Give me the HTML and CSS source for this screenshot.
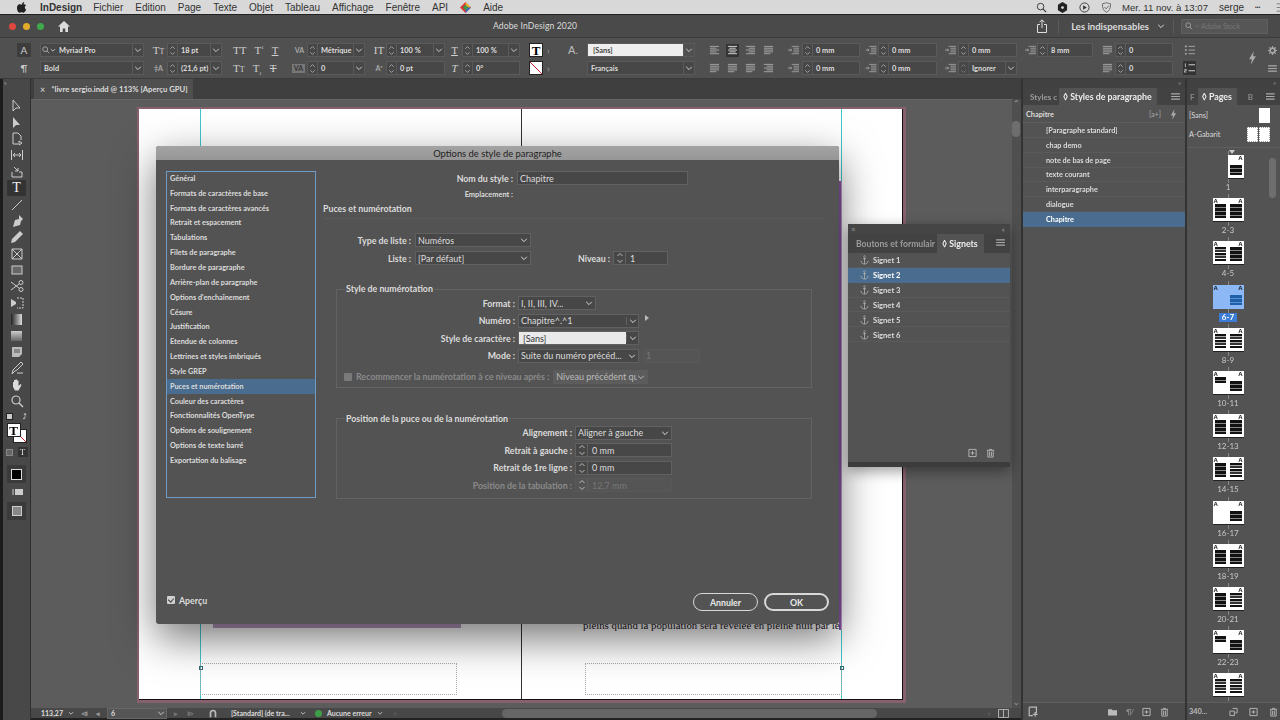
FILE: index.html
```html
<!DOCTYPE html>
<html lang="fr">
<head>
    <meta charset="UTF-8">
    <title>Adobe InDesign 2020</title>
    <link rel="stylesheet" href="styles.css">
</head>
<body>

<svg class="sprite" width="0" height="0">
    <symbol id="spin" viewBox="0 0 8 12"><path d="M1.500 4 4 1.500 6.500 4M1.500 8 4 10.500 6.500 8" fill="none" stroke="currentColor"/></symbol>
    <symbol id="chev" viewBox="0 0 8 8"><path d="M1.200 2.800 4 5.600 6.800 2.800" fill="none" stroke="currentColor"/></symbol>
    <symbol id="al-l" viewBox="0 0 12 12"><path d="M1 1.500h10M1 3.500h7M1 5.500h10M1 7.500h7M1 9.500h10" stroke="currentColor"/></symbol>
    <symbol id="al-c" viewBox="0 0 12 12"><path d="M1 1.500h10M2.500 3.500h7M1 5.500h10M2.500 7.500h7M1 9.500h10" stroke="currentColor"/></symbol>
    <symbol id="al-r" viewBox="0 0 12 12"><path d="M1 1.500h10M4 3.500h7M1 5.500h10M4 7.500h7M1 9.500h10" stroke="currentColor"/></symbol>
    <symbol id="al-j" viewBox="0 0 12 12"><path d="M1 1.500h10M1 3.500h10M1 5.500h10M1 7.500h10M1 9.500h7" stroke="currentColor"/></symbol>
    <symbol id="ind" viewBox="0 0 14 12"><path d="M5 1.500h8M7 3.500h6M7 5.500h6M7 7.500h6M5 9.500h8M1 5.500h4M3.500 4 5 5.500 3.500 7" fill="none" stroke="currentColor" stroke-width=".9"/></symbol>
    <symbol id="bul" viewBox="0 0 12 12"><path d="M1 1.500h2M1 5.500h2M1 9.500h2" stroke="currentColor" stroke-width="1.800"/><path d="M5 1.500h7M5 5.500h7M5 9.500h7" stroke="currentColor"/></symbol>
    <symbol id="nums" viewBox="0 0 12 12"><path d="M1.500 1v4M.5 7.500h2v1.500h-2v1.500h2" fill="none" stroke="currentColor" stroke-width=".8"/><path d="M5 2.500h7M5 9h7" stroke="currentColor"/></symbol>
    <symbol id="menu" viewBox="0 0 10 8"><path d="M0 1h10M0 4h10M0 7h10" stroke="currentColor" stroke-width="1.300"/></symbol>
    <symbol id="newp" viewBox="0 0 10 10"><path d="M1 1h8v8H1zM5 3v4M3 5h4" fill="none" stroke="currentColor"/></symbol>
    <symbol id="trash" viewBox="0 0 10 11"><path d="M3.500 1.500h3M1 2.500h8M2 3v7h6V3M4 4v5M6 4v5" fill="none" stroke="currentColor"/></symbol>
    <symbol id="anchor" viewBox="0 0 10 11"><path d="M5 2.500V10M3.400 4h3.200M1 6.500C1.400 9 3 10 5 10s3.600-1 4-3.500" fill="none" stroke="currentColor"/><circle cx="5" cy="1.500" r="1" fill="none" stroke="currentColor" stroke-width=".7"/></symbol>
    <symbol id="bolt" viewBox="0 0 8 12"><path d="M5 0 1 7h2.500L2.500 12 7 4.500H4.500z" fill="currentColor"/></symbol>
    <symbol id="gear" viewBox="0 0 10 10"><circle cx="5" cy="5" r="2.700" fill="none" stroke="currentColor" stroke-width="1.800"/><path d="M5 0v2M5 8v2M0 5h2M8 5h2M1.500 1.500l1.400 1.400M7.100 7.100l1.400 1.400M8.500 1.500 7.100 2.900M2.900 7.100 1.500 8.500" stroke="currentColor" stroke-width="1.300"/></symbol>
</svg>

<div class="app">
    <div class="menubar">
        <svg class="apple" viewBox="0 0 12 13"><path d="M8.600 0c.1 1-.3 1.800-.8 2.400-.5.600-1.300 1-2 .9-.1-.9.300-1.800.8-2.300C7.100.5 8 .1 8.600 0zM11 9.200c-.3.700-.5 1-.9 1.600-.6.800-1.300 1.900-2.300 1.900-.9 0-1.100-.6-2.300-.6s-1.500.6-2.400.6c-1 0-1.700-.9-2.300-1.800C-.2 8.500-.3 5.600.7 4.100c.7-1 1.700-1.600 2.700-1.600s1.700.6 2.500.6 1.300-.6 2.500-.6c.9 0 1.800.5 2.500 1.300-2.200 1.200-1.800 4.300.1 5.400z" fill="#222"/></svg>
        <span class="app-name">InDesign</span>
        <span>Fichier</span><span>Edition</span><span>Page</span><span>Texte</span><span>Objet</span><span>Tableau</span><span>Affichage</span><span>Fenêtre</span><span>API</span>
        <svg class="diamond" viewBox="0 0 12 12"><path d="M6 0 12 6 6 12 0 6z" fill="#d33"/><path d="M6 0 12 6H6z" fill="#e9b52c"/><path d="M6 6h6L6 12z" fill="#3a6fc2"/><path d="M3 6 6 3 9 6 6 9z" fill="#3d9a4a"/></svg>
        <span>Aide</span>
        <div class="menu-right">
            <svg class="mi search" viewBox="0 0 12 12"><circle cx="5" cy="5" r="3.600" fill="none" stroke="#333"/><path d="M7.600 7.600 11 11" stroke="#333" stroke-width="1.200"/></svg>
            <svg class="mi" viewBox="0 0 12 12"><path d="M6 0 11 3v6l-5 3-5-3V3z" fill="#222"/><circle cx="6" cy="6" r="1.500" fill="#ddd"/></svg>
            <svg class="mi" viewBox="0 0 12 12"><circle cx="6" cy="6" r="5" fill="none" stroke="#333"/><path d="M4.500 3.500v5L8.500 6z" fill="#333"/></svg>
            <svg class="mi" viewBox="0 0 12 12"><path d="M1.500 2 6 .8 10.500 2c0 5-1.500 8-4.500 9.200C3 10 1.500 7 1.500 2z" fill="none" stroke="#666"/><path d="M3.800 5.500 5.600 7.500 8.500 4" fill="none" stroke="#666"/></svg>
            <span class="clock">Mer. 11 nov. à 13:07</span>
            <span class="user">serge</span>
            <span class="dots">•••</span>
            <svg class="mi list" viewBox="0 0 12 12"><path d="M3 2h9M3 6h9M3 10h9" stroke="#777"/></svg>
        </div>
    </div>

    <div class="titlebar">
        <i class="light red"></i><i class="light yellow"></i><i class="light green"></i>
        <svg class="home" viewBox="0 0 12 11"><path d="M6 0 12 5.500H10V11H7.300V7.500H4.700V11H2V5.500H0z" fill="#ddd"/></svg>
        <span class="app-title">Adobe InDesign 2020</span>
        <div class="title-right">
            <svg class="share" viewBox="0 0 12 14"><path d="M6 9V1M3.500 3.300 6 .8l2.500 2.500M4 5.500H1.500v8h9v-8H8" fill="none" stroke="#ddd"/></svg>
            <span class="vsep"></span>
            <b class="workspace">Les indispensables</b>
            <svg class="ic8 wchev"><use href="#chev"/></svg>
            <span class="vsep"></span>
            <div class="stock"><svg class="ic8" viewBox="0 0 10 10"><circle cx="4" cy="4" r="3" fill="none" stroke="#aaa"/><path d="M6.200 6.200 9 9" stroke="#aaa"/></svg><svg class="ic6"><use href="#chev"/></svg>Adobe Stock</div>
        </div>
    </div>

    <div class="ctl">
        <span class="c mode on">A</span>
        <span class="c mode">¶</span>

        <div class="c"><div class="fld"><svg class="ic8 muted" viewBox="0 0 10 10"><circle cx="4" cy="4" r="3" fill="none" stroke="#bbb"/><path d="M6.200 6.200 9 9" stroke="#bbb"/></svg><svg class="ic6"><use href="#chev"/></svg><span class="val">Myriad Pro</span><span class="dd"><svg class="ic8"><use href="#chev"/></svg></span></div></div>
        <div class="c"><div class="fld"><span class="val">Bold</span><span class="dd"><svg class="ic8"><use href="#chev"/></svg></span></div></div>

        <div class="c pr8"><span class="g w17">T<small>T</small></span><div class="fld"><span class="sp"><svg><use href="#spin"/></svg></span><span class="val">18 pt</span><span class="dd"><svg class="ic8"><use href="#chev"/></svg></span></div></div>
        <div class="c pr8"><span class="g w17 lo">‡A</span><div class="fld"><span class="sp"><svg><use href="#spin"/></svg></span><span class="val">(21,6 pt)</span><span class="dd"><svg class="ic8"><use href="#chev"/></svg></span></div></div>

        <div class="c cases"><span class="g">TT</span><span class="g">T<sup>1</sup></span><span class="g under">T</span></div>
        <div class="c cases"><span class="g">T<small>T</small></span><span class="g">T<sub>1</sub></span><span class="g strike">T</span></div>

        <div class="c pr7"><span class="g w15 lo">VA</span><div class="fld"><span class="sp"><svg><use href="#spin"/></svg></span><span class="val">Métrique</span><span class="dd"><svg class="ic8"><use href="#chev"/></svg></span></div></div>
        <div class="c pr7"><span class="g w15 lo box">VA</span><div class="fld"><span class="sp"><svg><use href="#spin"/></svg></span><span class="val">0</span><span class="dd"><svg class="ic8"><use href="#chev"/></svg></span></div></div>

        <div class="c pr2"><span class="g w14">IT</span><div class="fld"><span class="sp"><svg><use href="#spin"/></svg></span><span class="val">100 %</span><span class="dd"><svg class="ic8"><use href="#chev"/></svg></span></div></div>
        <div class="c pr2"><span class="g w14 lo">Aª</span><div class="fld"><span class="sp"><svg><use href="#spin"/></svg></span><span class="val">0 pt</span></div></div>

        <div class="c pr9"><span class="g w15 under">T</span><div class="fld"><span class="sp"><svg><use href="#spin"/></svg></span><span class="val">100 %</span><span class="dd"><svg class="ic8"><use href="#chev"/></svg></span></div></div>
        <div class="c pr9"><span class="g w15 ital">T</span><div class="fld"><span class="sp"><svg><use href="#spin"/></svg></span><span class="val">0°</span></div></div>

        <div class="c swatch"><span class="fill-t">T</span><span class="more">›</span></div>
        <div class="c swatch"><span class="fill-none"></span><span class="more">›</span></div>

        <span class="c a-dot">A.</span>
        <span class="c"></span>

        <div class="c pr13"><div class="fld light-fld"><span class="val">[Sans]</span><span class="dd"><svg class="ic8"><use href="#chev"/></svg></span></div></div>
        <div class="c pr13"><div class="fld"><span class="val">Français</span><span class="dd"><svg class="ic8"><use href="#chev"/></svg></span></div></div>

        <div class="c aligns"><svg><use href="#al-l"/></svg><svg class="sel"><use href="#al-c"/></svg><svg><use href="#al-r"/></svg><svg><use href="#al-j"/></svg></div>
        <div class="c aligns"><svg><use href="#al-j"/></svg><svg><use href="#al-j"/></svg><svg><use href="#al-j"/></svg><svg><use href="#al-r"/></svg></div>

        <div class="c pr4"><svg class="ico w17"><use href="#ind"/></svg><div class="fld"><span class="sp"><svg><use href="#spin"/></svg></span><span class="val">0 mm</span></div></div>
        <div class="c pr4"><svg class="ico w17"><use href="#ind"/></svg><div class="fld"><span class="sp"><svg><use href="#spin"/></svg></span><span class="val">0 mm</span></div></div>

        <div class="c"><svg class="ico w14"><use href="#ind"/></svg><div class="fld"><span class="sp"><svg><use href="#spin"/></svg></span><span class="val">0 mm</span></div></div>
        <div class="c"><svg class="ico w14"><use href="#ind"/></svg><div class="fld"><span class="sp"><svg><use href="#spin"/></svg></span><span class="val">0 mm</span></div></div>

        <div class="c pr7"><svg class="ico w15"><use href="#ind"/></svg><div class="fld"><span class="sp"><svg><use href="#spin"/></svg></span><span class="val">0 mm</span></div></div>
        <div class="c pr7"><svg class="ico w15"><use href="#ind"/></svg><div class="fld"><span class="sp dim"><svg><use href="#spin"/></svg></span><span class="val">Ignorer</span><span class="dd"><svg class="ic8"><use href="#chev"/></svg></span></div></div>

        <div class="c pr7"><svg class="ico w13"><use href="#ind"/></svg><div class="fld"><span class="sp"><svg><use href="#spin"/></svg></span><span class="val">8 mm</span></div></div>
        <span class="c"></span>

        <div class="c pr10"><svg class="ico w15"><use href="#al-j"/></svg><div class="fld"><span class="sp"><svg><use href="#spin"/></svg></span><span class="val">0</span></div></div>
        <div class="c pr10"><svg class="ico w15"><use href="#al-j"/></svg><div class="fld"><span class="sp"><svg><use href="#spin"/></svg></span><span class="val">0</span></div></div>

        <div class="c"><svg class="ico w13"><use href="#bul"/></svg></div>
        <div class="c"><svg class="ico w13 sel"><use href="#nums"/></svg></div>

        <div class="c bolt-cell"><svg><use href="#bolt"/></svg></div>
        <span class="c"></span>

        <div class="c gear"><svg><use href="#gear"/></svg></div>
        <div class="c gear"><svg class="ic-menu"><use href="#menu"/></svg></div>
    </div>

    <div class="workarea">
        <aside class="tools">
            <div class="tools-top">»</div>
            <div class="tool"><svg viewBox="0 0 14 14"><path d="M3 1v11l3-3 4 0z" fill="none" stroke="#ccc"/></svg></div>
            <div class="tool"><svg viewBox="0 0 14 14"><path d="M3 1v11l3-3 4 0z" fill="#ccc"/></svg></div>
            <div class="tool"><svg viewBox="0 0 14 14"><path d="M3 1h5l3 3v4M3 1v11h5M9 9v4l3-2z" fill="none" stroke="#ccc"/></svg></div>
            <div class="tool"><svg viewBox="0 0 14 14"><path d="M1.500 2v10M12.500 2v10M3 7h8M5 5 3 7l2 2M9 5l2 2-2 2" fill="none" stroke="#ccc"/></svg></div>
            <div class="tool"><svg viewBox="0 0 14 14"><path d="M2 7v5h10V7H9M4 8h0M4 2l4 4M8 3v3H5" fill="none" stroke="#ccc"/></svg></div>
            <div class="tool on"><span>T</span></div>
            <div class="tool"><svg viewBox="0 0 14 14"><path d="M2 12 12 2" stroke="#ccc"/></svg></div>
            <div class="tool"><svg viewBox="0 0 14 14"><path d="M9 1l4 4-2 2-1 4-7 2 2-7 4-1z" fill="#ccc"/></svg></div>
            <div class="tool"><svg viewBox="0 0 14 14"><path d="M10 1l3 3-8 8-4 1 1-4z" fill="#ccc"/></svg></div>
            <div class="tool"><svg viewBox="0 0 14 14"><path d="M2 2h10v10H2zM2 2l10 10M12 2 2 12" fill="none" stroke="#ccc"/></svg></div>
            <div class="tool"><svg viewBox="0 0 14 14"><rect x="2" y="3" width="10" height="8" fill="#666" stroke="#ccc"/></svg></div>
            <div class="tool"><svg viewBox="0 0 14 14"><circle cx="11" cy="3.500" r="2" fill="none" stroke="#ccc"/><circle cx="11" cy="10.500" r="2" fill="none" stroke="#ccc"/><path d="M1 3l8 6M1 11l8-6" stroke="#ccc"/></svg></div>
            <div class="tool"><svg viewBox="0 0 14 14"><path d="M1 3l5 3v2l-5 3z" fill="#ccc"/><path d="M7 2h6v10H7" fill="none" stroke="#ccc" stroke-dasharray="2 1"/></svg></div>
            <div class="tool"><i class="grad"></i></div>
            <div class="tool"><i class="grad2"></i></div>
            <div class="tool"><svg viewBox="0 0 14 14"><path d="M2 2h10v7l-3 3H2z" fill="#bbb"/><path d="M4 5h6M4 7h6" stroke="#555"/></svg></div>
            <div class="tool"><svg viewBox="0 0 14 14"><path d="M11 1l2 2-6 6-2 1-3 3 1-4 1-1zM7 12h6" fill="none" stroke="#ccc"/></svg></div>
            <div class="tool"><svg viewBox="0 0 14 14"><path d="M3 7V4h1v3V2h1.500v5V1.500H7V7V2.500h1.500V8l2-2 1 1-3 5.500H5L3 9z" fill="#ddd"/></svg></div>
            <div class="tool"><svg viewBox="0 0 14 14"><circle cx="6" cy="6" r="4" fill="none" stroke="#ccc" stroke-width="1.200"/><path d="M9 9l4 4" stroke="#ccc" stroke-width="1.400"/></svg></div>
            <div class="swap"><i></i><span>⤴</span></div>
            <div class="fills"><span class="fill-t">T</span><span class="fill-none"></span></div>
            <div class="format"><i></i><b>T</b></div>
            <div class="tool dark"><i class="blk"></i></div>
            <div class="tool"><svg viewBox="0 0 14 14"><path d="M2 5h2M2 7h2M2 9h2" stroke="#ccc"/><rect x="5" y="4" width="8" height="6" fill="#ccc"/></svg></div>
            <div class="tool dark last"><svg viewBox="0 0 14 14"><rect x="2.500" y="2.500" width="9" height="9" fill="#888" stroke="#ccc"/></svg></div>
        </aside>

        <main class="center">
            <div class="doc-tabs"><div class="doc-tab"><span class="x">×</span>*livre sergio.indd @ 113% [Aperçu GPU]</div></div>
            <div class="canvas">
                <div class="pasteboard">
                    <div class="spread">
                        <i class="guide g-left"></i>
                        <i class="guide g-right"></i>
                        <i class="spine"></i>
                        <i class="frame f-text"></i>
                        <i class="frame f-left"></i>
                        <p class="page-line">pleins quand la population sera révélée en pleine nuit par le</p>
                        <i class="dotted d-left"></i>
                        <i class="dotted d-right"></i>
                        <i class="port p-left"></i>
                        <i class="port p-right"></i>
                    </div>
                </div>
                <div class="vscroll"><span class="arrow">⌃</span><i></i><span class="arrow down">⌄</span></div>
            </div>
            <div class="status">
                <span class="zoom">113,27</span><svg class="ic6"><use href="#chev"/></svg>
                <span class="nav first">⧏</span><span class="nav">◂</span>
                <div class="pagefld"><span>6</span><span class="dd"><svg class="ic8"><use href="#chev"/></svg></span></div>
                <span class="nav dim">▸</span><span class="nav dim">⧐</span>
                <svg class="prof" viewBox="0 0 12 12"><path d="M2 11V6a4 4 0 0 1 8 0v5H8V6a2 2 0 0 0-4 0v5z" fill="#bbb"/></svg>
                <span class="std">[Standard] (de tra...</span><svg class="ic6"><use href="#chev"/></svg>
                <i class="ok"></i><span>Aucune erreur</span><svg class="ic6"><use href="#chev"/></svg>
                <span class="nav dim lt">‹</span>
                <div class="hscroll"><i></i></div>
                <span class="nav dim">›</span>
                <svg class="layout" viewBox="0 0 12 10"><path d="M.5.500h11v9H.500zM6 .500v9" fill="none" stroke="#bbb"/></svg>
            </div>
        </main>

        <aside class="dock">
            <section class="panel styles">
                <div class="dock-top"><span>»</span></div>
                <div class="tabs">
                    <span class="tab off">Styles c</span>
                    <span class="tab active wide">◊ Styles de paragraphe</span>
                    <svg class="pmenu"><use href="#menu"/></svg>
                </div>
                <div class="cur"><span>Chapitre</span><span class="cur-r"><span>[a+]</span><svg class="ic8b"><use href="#bolt"/></svg></span></div>
                <ul class="rows">
                    <li>[Paragraphe standard]</li>
                    <li>chap demo</li>
                    <li>note de bas de page</li>
                    <li>texte courant</li>
                    <li>interparagraphe</li>
                    <li>dialogue</li>
                    <li class="sel">Chapitre</li>
                </ul>
                <div class="pfoot">
                    <svg class="fi load" viewBox="0 0 10 10"><path d="M1 1h6v5M1 1v7h3M6 5v4M4 7h4" fill="none" stroke="currentColor"/></svg>
                    <span class="fspace"></span>
                    <svg class="fi" viewBox="0 0 10 10"><path d="M0 2h4l1 1h5v6H0z" fill="currentColor"/></svg>
                    <span class="pil">¶⁄</span>
                    <svg class="fi"><use href="#newp"/></svg>
                    <svg class="fi"><use href="#trash"/></svg>
                </div>
            </section>

            <section class="panel pages">
                <div class="dock-top"><span>»</span></div>
                <div class="tabs">
                    <span class="tab off narrow">F</span>
                    <span class="tab active">◊ Pages</span>
                    <span class="tab off narrow2">B</span>
                    <svg class="pmenu"><use href="#menu"/></svg>
                </div>
                <div class="master"><span>[Sans]</span><i class="m-page"></i></div>
                <div class="master two"><span>A-Gabarit</span><div class="m-spread"><i></i><i></i></div></div>
                <div class="thumbs-wrap">
                    <span class="first-mark"></span>
                    <div class="thumbs">
                        <div class="th"><div class="sp-box"><div class="pg blank-side"></div><div class="pg"><b>A</b><i class="t t-low"></i></div></div><span class="num">1</span></div>
                        <div class="th"><div class="sp-box"><div class="pg"><b>A</b><i class="t"></i></div><div class="pg"><b>A</b><i class="t"></i></div></div><span class="num">2-3</span></div>
                        <div class="th"><div class="sp-box"><div class="pg"><b>A</b><i class="t t-grey"></i></div><div class="pg"><b>A</b><i class="t"></i></div></div><span class="num">4-5</span></div>
                        <div class="th cur-th"><div class="sp-box"><div class="pg"><b>A</b><i class="t t-head"></i></div><div class="pg"><b>A</b><i class="t t-low"></i></div></div><span class="num">6-7</span></div>
                        <div class="th"><div class="sp-box"><div class="pg"><b>A</b><i class="t t-grey"></i></div><div class="pg"><b>A</b><i class="t t-grey"></i></div></div><span class="num">8-9</span></div>
                        <div class="th"><div class="sp-box"><div class="pg"><b>A</b><i class="t t-top"></i></div><div class="pg"><b>A</b><i class="t t-low"></i></div></div><span class="num">10-11</span></div>
                        <div class="th"><div class="sp-box"><div class="pg"><b>A</b><i class="t"></i></div><div class="pg"><b>A</b><i class="t"></i></div></div><span class="num">12-13</span></div>
                        <div class="th"><div class="sp-box"><div class="pg"><b>A</b><i class="t"></i></div><div class="pg"><b>A</b><i class="t t-grey"></i></div></div><span class="num">14-15</span></div>
                        <div class="th"><div class="sp-box"><div class="pg"><b>A</b></div><div class="pg"><b>A</b><i class="t t-low"></i></div></div><span class="num">16-17</span></div>
                        <div class="th"><div class="sp-box"><div class="pg"><b>A</b><i class="t"></i></div><div class="pg"><b>A</b><i class="t"></i></div></div><span class="num">18-19</span></div>
                        <div class="th"><div class="sp-box"><div class="pg"><b>A</b><i class="t"></i></div><div class="pg"><b>A</b><i class="t t-grey"></i></div></div><span class="num">20-21</span></div>
                        <div class="th"><div class="sp-box"><div class="pg"><b>A</b><i class="t t-top"></i></div><div class="pg"><b>A</b><i class="t t-low"></i></div></div><span class="num">22-23</span></div>
                        <div class="th"><div class="sp-box"><div class="pg"><b>A</b><i class="t t-grey"></i></div><div class="pg"><b>A</b><i class="t t-grey"></i></div></div></div>
                    </div>
                    <div class="pscroll"><i></i></div>
                </div>
                <div class="pfoot wide-gap">
                    <span class="count">340...</span>
                    <span class="fspace"></span>
                    <svg class="fi" viewBox="0 0 10 10"><path d="M4 1h5v5H7M1 4h5v5H1z" fill="none" stroke="currentColor"/></svg>
                    <svg class="fi"><use href="#newp"/></svg>
                    <svg class="fi"><use href="#trash"/></svg>
                </div>
            </section>
        </aside>
    </div>

    <div class="dialog">
        <div class="dlg-title">Options de style de paragraphe</div>
        <div class="dlg-main">
            <ul class="cats">
                <li>Général</li>
                <li>Formats de caractères de base</li>
                <li>Formats de caractères avancés</li>
                <li>Retrait et espacement</li>
                <li>Tabulations</li>
                <li>Filets de paragraphe</li>
                <li>Bordure de paragraphe</li>
                <li>Arrière-plan de paragraphe</li>
                <li>Options d'enchaînement</li>
                <li>Césure</li>
                <li>Justification</li>
                <li>Etendue de colonnes</li>
                <li>Lettrines et styles imbriqués</li>
                <li>Style GREP</li>
                <li class="sel">Puces et numérotation</li>
                <li>Couleur des caractères</li>
                <li>Fonctionnalités OpenType</li>
                <li>Options de soulignement</li>
                <li>Options de texte barré</li>
                <li>Exportation du balisage</li>
            </ul>
            <div class="form">
                <div class="row r-name"><label>Nom du style :</label><div class="in w171">Chapitre</div></div>
                <div class="row r-loc"><label>Emplacement :</label></div>
                <h2 class="sect">Puces et numérotation</h2>

                <div class="row r-type"><label>Type de liste :</label><div class="sel-in w116"><span>Numéros</span><svg class="ic8"><use href="#chev"/></svg></div></div>
                <div class="row r-list"><label>Liste :</label><div class="sel-in w116"><span>[Par défaut]</span><svg class="ic8"><use href="#chev"/></svg></div>
                    <label class="lvl">Niveau :</label><div class="in spin-in w55"><span class="sp2"><svg><use href="#spin"/></svg></span>1</div>
                </div>

                <fieldset class="grp g-num">
                    <legend>Style de numérotation</legend>
                    <div class="row"><label>Format :</label><div class="sel-in w78"><span>I, II, III, IV...</span><svg class="ic8"><use href="#chev"/></svg></div></div>
                    <div class="row"><label>Numéro :</label><div class="combo w121"><span class="cv">Chapitre^.^1</span><span class="cb"><svg class="ic8"><use href="#chev"/></svg></span></div><i class="tri"></i></div>
                    <div class="row"><label>Style de caractère :</label><div class="combo w121"><span class="cv white">[Sans]</span><span class="cb"><svg class="ic8"><use href="#chev"/></svg></span></div></div>
                    <div class="row"><label>Mode :</label><div class="sel-in w121"><span>Suite du numéro précéd...</span><svg class="ic8"><use href="#chev"/></svg></div><div class="in w57 off">1</div></div>
                    <div class="row r-restart"><i class="chk off"></i><span class="off-t">Recommencer la numérotation à ce niveau après :</span><div class="sel-in off w95"><span>Niveau précédent qu</span><svg class="ic8"><use href="#chev"/></svg></div></div>
                </fieldset>

                <fieldset class="grp g-pos">
                    <legend>Position de la puce ou de la numérotation</legend>
                    <div class="row"><label>Alignement :</label><div class="sel-in w97"><span>Aligner à gauche</span><svg class="ic8"><use href="#chev"/></svg></div></div>
                    <div class="row"><label>Retrait à gauche :</label><div class="in spin-in w97"><span class="sp2"><svg><use href="#spin"/></svg></span>0 mm</div></div>
                    <div class="row"><label>Retrait de 1re ligne :</label><div class="in spin-in w97"><span class="sp2"><svg><use href="#spin"/></svg></span>0 mm</div></div>
                    <div class="row is-off"><label>Position de la tabulation :</label><div class="in spin-in w97 off"><span class="sp2"><svg><use href="#spin"/></svg></span>12,7 mm</div></div>
                </fieldset>
            </div>
        </div>
        <div class="dlg-foot">
            <label class="preview"><i class="chk on"></i>Aperçu</label>
            <div class="btns"><button class="btn">Annuler</button><button class="btn ok-btn">OK</button></div>
        </div>
    </div>

    <div class="float-panel">
        <div class="fp-top"><span>×</span><span>«</span></div>
        <div class="tabs fp-tabs">
            <span class="tab off fp-off">Boutons et formulair</span>
            <span class="tab active fp-act">◊ Signets</span>
            <svg class="pmenu"><use href="#menu"/></svg>
        </div>
        <ul class="rows marks">
            <li><svg class="anc"><use href="#anchor"/></svg>Signet 1</li>
            <li class="sel"><svg class="anc"><use href="#anchor"/></svg>Signet 2</li>
            <li><svg class="anc"><use href="#anchor"/></svg>Signet 3</li>
            <li><svg class="anc"><use href="#anchor"/></svg>Signet 4</li>
            <li><svg class="anc"><use href="#anchor"/></svg>Signet 5</li>
            <li><svg class="anc"><use href="#anchor"/></svg>Signet 6</li>
        </ul>
        <div class="fp-foot"><svg class="fi"><use href="#newp"/></svg><svg class="fi"><use href="#trash"/></svg></div>
        <div class="fp-grip"></div>
    </div>
</div>

</body>
</html>
```

FILE: styles.css
```css
* { box-sizing: border-box; }
:root {
    --panel: #535353;
    --panel-dark: #434343;
    --field: #474747;
    --line: #626262;
    --text: #dcdcdc;
    --sel: #4a6c8e;
}
html, body { margin: 0; height: 100%; overflow: hidden; }
body {
    background: #333;
    color: var(--text);
    font-family: Lato, "Open Sans", sans-serif;
    font-size: 7.300px;
    font-weight: 700;
}
ul { list-style: none; margin: 0; padding: 0; }
i { display: block; }
.sprite { position: absolute; }

.app {
    position: relative;
    width: 1280px;
    height: 720px;
    display: flex;
    flex-direction: column;
    overflow: hidden;
    filter: blur(.3px);
}

/* menu bar */
.menubar {
    height: 15px;
    flex: none;
    display: flex;
    align-items: center;
    gap: 12px;
    padding-left: 17px;
    background: #d8d8d8;
    border-bottom: 1px solid #222;
    color: #333;
    font: 10px "Liberation Sans", sans-serif;
}
.apple { width: 10px; height: 11px; margin-right: 1px; }
.app-name { font-weight: bold; margin-right: -1px; }
.diamond { width: 11px; height: 11px; margin-left: 0; }
.menu-right {
    margin-left: auto;
    display: flex;
    align-items: center;
    gap: 11px;
}
.mi { width: 11px; height: 11px; }
.search { margin-right: -1px; }
.list { margin-right: -5px; }
.clock { margin-left: -1px; font-size: 9.600px; }
.dots { width: 8px; font-size: 5px; white-space: nowrap; }

/* title bar */
.titlebar {
    height: 23px;
    flex: none;
    display: flex;
    align-items: center;
    padding-left: 9px;
    background: #4a4a4a;
    border-bottom: 1px solid #3c3c3c;
    font-size: 8.600px;
    font-weight: 400;
}
.light { width: 7px; height: 7px; border-radius: 50%; margin-right: 7px; }
.red { background: #e0483e; }
.yellow { background: #e2ab2b; }
.green { background: #3ea84a; }
.home { width: 12px; height: 11px; margin-left: 7px; }
.app-title { margin-left: 423px; letter-spacing: .1px; }
.title-right { margin-left: auto; display: flex; align-items: center; padding-right: 12px; }
.share { width: 12px; height: 14px; margin-right: 10px; }
.vsep { width: 1px; height: 15px; background: #5a5a5a; }
.workspace { margin-left: 12px; font-weight: 700; font-size: 9.500px; }
.ic8 { width: 8px; height: 8px; flex: none; }
.ic6 { width: 6px; height: 6px; flex: none; }
.wchev { margin: 0 8px; }
.stock {
    width: 87px;
    height: 15px;
    margin-left: 7px;
    display: flex;
    align-items: center;
    gap: 1px;
    padding-left: 3px;
    background: #565656;
    border: 1px solid #5f5f5f;
    color: #777;
    font-size: 7px;
}

/* control bar */
.ctl {
    height: 41px;
    flex: none;
    display: grid;
    grid-auto-flow: column;
    grid-template-rows: 14px 14px;
    grid-template-columns: 25px 110px 80px 62px 80px 75px 82px 39px 19px 121px 77px 79px 79px 81px 76px 83px 65px 20px 12px;
    row-gap: 4px;
    padding: 5px 0 0 15px;
    background: #505050;
    border-bottom: 1px solid #3b3b3b;
    font-weight: 400;
}
.c { display: flex; align-items: center; padding-right: 6px; min-width: 0; }
.pr2 { padding-right: 2px; }
.pr4 { padding-right: 4px; }
.pr7 { padding-right: 7px; }
.pr8 { padding-right: 8px; }
.pr9 { padding-right: 9px; }
.pr10 { padding-right: 10px; }
.pr13 { padding-right: 13px; }
.mode {
    width: 14px;
    justify-content: center;
    padding: 0;
    margin-left: 2px;
    font-size: 10px;
    color: #ccc;
}
.mode.on { background: #3d3d3d; }
.fld {
    flex: 1;
    min-width: 0;
    height: 14px;
    display: flex;
    align-items: center;
    background: var(--field);
    border: 1px solid #5a5a5a;
    font-weight: 700;
    font-size: 7.400px;
}
.fld .muted { margin-left: 1px; }
.val { flex: 1; padding-left: 3px; white-space: nowrap; overflow: hidden; }
.sp { width: 10px; height: 100%; flex: none; display: flex; align-items: center; justify-content: center; border-right: 1px solid #5a5a5a; color: #aaa; }
.sp svg { width: 7px; height: 11px; }
.sp.dim { opacity: .5; }
.dd { width: 11px; height: 100%; flex: none; display: flex; align-items: center; justify-content: center; border-left: 1px solid #5a5a5a; color: #ccc; }
.light-fld { background: #eee; color: #444; }
.light-fld .dd { background: #505050; }
.light-fld .val { padding-left: 5px; }
.g {
    flex: none;
    font: 11px "Liberation Serif", serif;
    color: #cfcfcf;
    text-align: center;
    white-space: nowrap;
}
.g small { font-size: 8px; }
.g sup, .g sub { font-size: 5px; line-height: 0; }
.w17 { width: 17px; }
.w15 { width: 15px; }
.w14 { width: 14px; }
.w13 { width: 13px; }
.lo { font: 700 7px Lato, sans-serif; color: #aaa; }
.box { background: #777; color: #333; height: 9px; line-height: 9px; width: 13px; margin-right: 2px; }
.under { text-decoration: underline; }
.strike { text-decoration: line-through; }
.ital { font-style: italic; }
.cases { gap: 8px; padding: 0 0 0 3px; }
.ico { height: 11px; flex: none; color: #a8a8a8; }
.ico.sel { background: #333; height: 14px; padding: 1px; color: #ddd; }
.swatch { gap: 4px; padding: 0; }
.fill-t {
    width: 14px;
    height: 14px;
    display: block;
    background: #fff;
    border: 1px solid #222;
    color: #000;
    font: 700 13px/13px "Liberation Serif", serif;
    text-align: center;
}
.fill-none {
    width: 14px;
    height: 14px;
    display: block;
    background: linear-gradient(to top right, #fff 46%, #c8232c 46%, #c8232c 54%, #fff 54%);
    border: 1px solid #222;
}
.more { color: #aaa; font-size: 9px; }
.a-dot { font: 11px "Liberation Sans", sans-serif; color: #bbb; }
.aligns { gap: 5px; padding: 0; color: #a8a8a8; }
.aligns svg { width: 13px; height: 13px; padding: 1px; flex: none; }
.aligns .sel { background: #333; color: #ddd; }
.bolt-cell { color: #aaa; padding: 0; align-items: flex-start; }
.bolt-cell svg { width: 9px; height: 14px; margin-top: 8px; }
.gear { color: #aaa; padding: 0; }
.gear svg { width: 9px; height: 9px; flex: none; }
.gear .ic-menu { height: 7px; }

/* work area */
.workarea { flex: 1; min-height: 0; display: flex; }
.tools {
    width: 31px;
    flex: none;
    display: flex;
    flex-direction: column;
    align-items: center;
    background: #484848;
    border-left: 3px solid #1c1c1c;
    border-right: 1px solid #2f2f2f;
}
.tools-top { height: 19px; width: 100%; padding-left: 1px; font-size: 6px; color: #999; }
.tool { width: 19px; height: 16.400px; flex: none; display: flex; align-items: center; justify-content: center; }
.tool svg { width: 14px; height: 14px; }
.tool.on { background: #333; font: 14px/16px "Liberation Serif", serif; color: #eee; }
.tool.dark { background: #3a3a3a; height: 18px; margin-top: 2px; }
.grad { width: 11px; height: 11px; background: linear-gradient(to right, #222, #ddd); }
.grad2 { width: 11px; height: 10px; background: linear-gradient(#ccc, #666); }
.blk { width: 11px; height: 11px; background: #000; border: 1px solid #ddd; }
.swap { display: flex; justify-content: space-between; align-items: center; width: 21px; height: 12px; margin-top: 1px; color: #bbb; }
.swap i { width: 7px; height: 7px; background: #ccc; border: 1px solid #222; }
.fills { position: relative; width: 22px; height: 21px; margin-top: 1px; }
.fills .fill-t { position: absolute; left: 1px; top: 0; z-index: 1; }
.fills .fill-none { position: absolute; left: 7px; top: 6px; }
.format { display: flex; gap: 5px; align-items: center; height: 12px; margin: 2px 0 5px; }
.format i { width: 7px; height: 7px; background: #666; border: 1px solid #888; }
.format b { width: 10px; height: 10px; background: #333; font: 9px/10px "Liberation Serif", serif; text-align: center; }

.center { width: 990px; flex: none; display: flex; flex-direction: column; }
.doc-tabs { height: 20px; flex: none; display: flex; align-items: flex-end; padding-left: 3px; background: #3f3f3f; }
.doc-tab {
    width: 159px;
    height: 20px;
    display: flex;
    align-items: center;
    padding-left: 6px;
    background: #4f4f4f;
    font-size: 7.700px;
    white-space: nowrap;
}
.x { margin-right: 6px; font-size: 9px; font-weight: 400; }
.canvas { flex: 1; min-height: 0; display: flex; }
.pasteboard {
    flex: 1;
    padding: 9px 0 0 107px;
    background: #5c5c5c;
    box-shadow: inset 0 1px #666;
    overflow: hidden;
}

/* spread: marks sit on the page as on a free canvas */
.spread {
    position: relative;
    width: 767px;
    height: 594px;
    background: #fff;
    border: 2px solid #86606a;
    border-top-width: 1px;
    border-left-width: 1px;
    outline: 1px solid #86606a;
    box-shadow: inset -1px -1px 0 #111;
}
.guide { position: absolute; top: 0; bottom: 1px; width: 1px; background: #3fc6cc; }
.g-left { left: 61px; }
.g-right { left: 702px; }
.spine { position: absolute; top: 0; bottom: 1px; left: 382px; width: 1px; background: #333; }
.frame { position: absolute; }
.f-text { left: 700px; top: 72px; width: 3px; height: 449px; background: #8b54a8; box-shadow: inset -1px 0 #b79ac0; }
.f-left { left: 74px; top: 515px; width: 248px; height: 4px; background: #b79ac0; border: 0; }
.page-line {
    position: absolute;
    left: 444px;
    top: 510px;
    margin: 0;
    width: 258px;
    overflow: hidden;
    white-space: nowrap;
    font: 400 10.800px "Liberation Serif", serif;
    color: #1c1420;
}
.dotted { position: absolute; top: 554px; width: 257px; height: 32px; border: 1px dotted #aaa; }
.d-left { left: 61px; }
.d-right { left: 446px; }
.port { position: absolute; top: 557px; width: 4px; height: 4px; border: 1px solid #3a6a70; }
.p-left { left: 60px; }
.p-right { left: 701px; }

.vscroll { width: 9px; flex: none; background: #4f4f4f; color: #888; font-size: 8px; text-align: center; position: relative; }
.vscroll i { width: 8px; height: 16px; margin-top: 13px; border-radius: 4px; background: #6e6e6e; }
.vscroll .arrow { display: block; height: 9px; line-height: 9px; }
.vscroll .down { position: absolute; bottom: 1px; width: 9px; }

/* status bar */
.status {
    height: 12px;
    flex: none;
    display: flex;
    align-items: center;
    gap: 5px;
    padding-left: 10px;
    background: #484848;
    border-bottom: 2px solid #222;
    font-size: 7px;
    white-space: nowrap;
}
.nav { color: #999; font-size: 7px; width: 9px; text-align: center; }
.nav.first { margin-left: 1px; }
.nav.dim { color: #777; }
.lt { margin-left: 3px; }
.pagefld { width: 60px; height: 11px; display: flex; justify-content: space-between; align-items: center; padding-left: 3px; background: #555; border: 1px solid #666; margin-left: -1px; }
.pagefld .dd { height: 100%; }
.prof { width: 10px; height: 10px; margin: 0 8px; }
.std { width: 64px; overflow: hidden; }
.ok { width: 7px; height: 7px; border-radius: 50%; background: #3f9f48; margin-left: 4px; }
.hscroll { flex: none; width: 501px; margin-left: 74px; }
.hscroll i { width: 375px; height: 9px; margin-left: 23px; border-radius: 5px; background: #666; }
.layout { width: 11px; height: 9px; margin-left: -1px; }

/* right dock */
.dock { flex: 1; display: flex; gap: 2px; min-width: 0; padding-left: 2px; background: #333; }
.panel { display: flex; flex-direction: column; background: var(--panel); }
.styles { width: 162px; }
.pages { flex: 1; min-width: 0; }
.dock-top { height: 9px; flex: none; padding-right: 4px; background: #414141; color: #888; font-size: 6px; text-align: right; line-height: 8px; }
.tabs {
    height: 17px;
    flex: none;
    display: flex;
    align-items: stretch;
    background: #424242;
    position: relative;
    color: #9c9c9c;
    font-size: 8px;
    white-space: nowrap;
}
.tab { display: flex; align-items: center; padding-left: 7px; overflow: hidden; }
.tab.off { width: 36px; }
.tab.active { background: var(--panel); color: #eee; padding-left: 4px; width: 40px; font-size: 8.800px; }
.tab.wide { width: 98px; }
.tab.narrow { width: 11px; padding-left: 3px; color: #888; }
.tab.narrow2 { width: 30px; padding-left: 11px; color: #888; }
.pmenu { width: 9px; height: 7px; margin: 5px 5px 0 auto; color: #aaa; }
.cur { height: 18px; flex: none; display: flex; justify-content: space-between; align-items: center; padding: 2px 8px 0 3px; border-bottom: 1px solid #5d5d5d; }
.cur-r { display: flex; gap: 9px; align-items: center; font-weight: 400; color: #aaa; }
.ic8b { width: 7px; height: 11px; color: #aaa; }
.rows li { height: 14.850px; display: flex; align-items: center; padding: 1px 0 0 23px; border-bottom: 1px solid #5a5a5a; }
.rows li.sel { background: var(--sel); border-color: var(--sel); color: #fff; }
.styles .rows { flex: 1; }
.pfoot { height: 18px; flex: none; display: flex; align-items: center; gap: 9px; padding: 0 16px 0 5px; margin-top: auto; background: #4c4c4c; border-top: 1px solid #5e5e5e; color: #bbb; }
.wide-gap { gap: 11px; padding-right: 17px; }
.fi { width: 9px; height: 10px; flex: none; }
.fspace { flex: 1; }
.load { width: 12px; height: 12px; }
.pil { font-size: 8px; color: #888; }
.count { margin-left: -3px; }

/* pages panel */
.master { height: 19px; flex: none; display: flex; justify-content: space-between; align-items: center; padding: 2px 10px 0 2px; font-weight: 400; }
.master.two { height: 24px; border-bottom: 1px solid #5f5f5f; padding: 0 10px 3px 2px; }
.m-page { width: 11px; height: 15px; background: #fff; }
.m-spread { display: flex; gap: 1px; }
.m-spread i { width: 11px; height: 15px; background: #fff; border: 1px dotted #999; }
.thumbs-wrap { flex: 1; min-height: 0; display: flex; position: relative; overflow: hidden; }
.first-mark { position: absolute; left: 42px; top: 2px; border: 3px solid transparent; border-top: 4px solid #ccc; border-bottom: 0; }
.thumbs { width: 82px; padding-top: 7px; }
.th { height: 43.200px; width: 82px; display: flex; flex-direction: column; align-items: center; color: #c8c8c8; font-size: 8px; font-weight: 400; position: relative; }
.sp-box { display: flex; width: 31px; height: 24px; position: relative; }
.th::before { content: ""; position: absolute; left: 41px; top: -4px; height: 32px; width: 1px; background: #888; }
.pg { position: relative; width: 15.500px; height: 24px; background: #fff; overflow: hidden; border-bottom: 1px solid #222; }
.blank-side { background: transparent; border: 0; }
.pg b { position: absolute; top: 0; left: 1px; font: 700 6px/6px "Liberation Sans", sans-serif; color: #111; }
.pg + .pg b { left: auto; right: 1px; }
.t { position: absolute; left: 2px; right: 2px; top: 6px; bottom: 3px; background: repeating-linear-gradient(#111 0 3px, #888 3px 4px); }
.t-grey { background: repeating-linear-gradient(#111 0 2px, #aaa 2px 3px, #333 3px 5px, #fff 5px 6px); }
.t-low { top: 10px; }
.t-top { bottom: 11px; }
.t-head { bottom: 19px; right: 5px; background: #2560a8; }
.num { margin-top: 4px; line-height: 9px; padding: 0 3px; }
.cur-th .pg { background: #8cb8f5; border-color: #8cb8f5; }
.cur-th .t { background: repeating-linear-gradient(#1f5ea8 0 3px, #5a90d0 3px 4px); }
.cur-th .t-head { background: #2560a8; }
.cur-th .num { background: #3a7cd6; color: #fff; font-weight: 700; }
.pscroll { width: 7px; margin-top: 7px; }
.pscroll i { width: 7px; height: 40px; margin-top: 3px; border-radius: 4px; background: #6e6e6e; }

/* dialog window over the workspace */
.dialog {
    position: absolute;
    left: 156px;
    top: 146px;
    width: 683px;
    height: 478px;
    display: flex;
    flex-direction: column;
    background: var(--panel);
    border-radius: 3px;
    box-shadow: 0 14px 42px rgba(0, 0, 0, .55);
    font-weight: 400;
}
.dlg-title {
    height: 14px;
    flex: none;
    background: linear-gradient(#a3a3a3, #979797);
    border-radius: 3px 3px 0 0;
    color: #222;
    font-size: 9.400px;
    line-height: 15px;
    text-align: center;
}
.dlg-main { flex: 1; display: flex; padding: 11px 10px 0; }
.cats {
    width: 150px;
    height: 327px;
    flex: none;
    border: 1px solid #6f9cc4;
    font-weight: 700;
}
.cats li { height: 14.850px; display: flex; align-items: center; padding-left: 3px; white-space: nowrap; }
.cats li:first-child { margin-top: -1px; }
.cats li.sel { background: var(--sel); }
.form { margin-left: 7px; width: 503px; font-size: 8.800px; font-weight: 700; }
.row { display: flex; align-items: center; height: 14px; margin-top: 3.500px; }
.row label { flex: none; width: 178px; margin-right: 3px; text-align: right; white-space: nowrap; }
.in, .sel-in, .combo { height: 14px; display: flex; align-items: center; background: var(--field); border: 1px solid #616161; white-space: nowrap; font-weight: 400; font-size: 9px; }
.in { padding-left: 2px; }
.sel-in { justify-content: space-between; padding: 0 2px; overflow: hidden; }
.sel-in span { overflow: hidden; }
.combo .cv { flex: 1; height: 100%; padding-left: 2px; display: flex; align-items: center; }
.combo .cv.white { background: #eaeaea; color: #333; padding-left: 4px; }
.combo .cb { width: 12px; display: flex; justify-content: center; border-left: 1px solid #616161; }
.w171 { width: 171px; }
.w116 { width: 116px; }
.w55 { width: 55px; }
.w78 { width: 78px; }
.w121 { width: 121px; }
.w57 { width: 57px; margin-left: 4px; }
.w95 { width: 95px; }
.w97 { width: 97px; }
.r-name { margin-top: 0; }
.r-name label { width: 190px; margin-right: 4px; }
.r-loc { height: 12px; margin-top: 3px; font-size: 7.400px; }
.r-loc label { width: 190px; }
.sect { margin: 3px 0 0; height: 16px; font-size: 8.800px; font-weight: 700; line-height: 12px; border-bottom: 1px solid #5a5a5a; }
.r-type { margin-top: 14px; }
.row.r-list { margin-top: 4px; }
.r-type label, .r-list label { width: 88px; margin-right: 4px; }
.r-list .lvl { width: 32px; margin: 0 3px 0 47px; }
.spin-in { padding-left: 0; }
.sp2 { width: 12px; height: 100%; display: flex; align-items: center; justify-content: center; margin-right: 4px; border-right: 1px solid #616161; color: #bbb; }
.sp2 svg { width: 8px; height: 12px; }
.grp { margin: 18px 14px 0 13px; padding: 0 0 3px; border: 1px solid #636363; min-width: 0; }
.grp legend { margin-left: 8px; padding: 0 1px; height: 12px; line-height: 12px; }
.grp .row:first-of-type { margin-top: 1px; }
.g-pos { margin-top: 25px; padding-bottom: 6px; }
.g-pos .row label { width: 235px; }
.tri { width: 0; height: 0; margin: -5px 0 0 6px; border: 3px solid transparent; border-left: 4px solid #bbb; }
.in.off { background: #555; border-color: #585858; color: #777; }
.sel-in.off { background: #5c5c5c; border-color: #5c5c5c; color: #bbb; margin-left: 4px; }
.row.r-restart { padding-left: 7px; margin-top: 7px; }
.off-t { color: #8a8a8a; margin-left: 4px; white-space: nowrap; }
.is-off label { color: #8a8a8a; }
.chk { width: 8px; height: 8px; flex: none; background: #7a7a7a; border-radius: 1px; }
.chk.on { background: #d0d0d0; position: relative; }
.chk.on::after { content: ""; position: absolute; left: 2px; top: 1px; width: 3px; height: 4px; border: solid #444; border-width: 0 1px 1px 0; transform: rotate(40deg); }
.dlg-foot { display: flex; justify-content: space-between; align-items: center; padding: 0 10px 13px 11px; }
.preview { display: flex; align-items: center; gap: 4px; margin-top: -4px; font-size: 8.800px; font-weight: 700; }
.btns { display: flex; gap: 6px; }
.btn {
    width: 65px;
    height: 18px;
    padding: 0;
    background: transparent;
    border: 1px solid #d8d8d8;
    border-radius: 9px;
    color: #e8e8e8;
    font: 700 8.800px Lato, sans-serif;
}
.ok-btn { border-width: 2px; }

/* floating bookmarks panel */
.float-panel {
    position: absolute;
    left: 848px;
    top: 224px;
    width: 162px;
    height: 243px;
    display: flex;
    flex-direction: column;
    background: var(--panel);
    box-shadow: 0 4px 14px rgba(0, 0, 0, .4);
    border-radius: 2px;
}
.fp-top { height: 10px; flex: none; display: flex; justify-content: space-between; padding: 0 5px 0 3px; background: #454545; color: #999; font-size: 8px; line-height: 10px; font-weight: 400; }
.fp-tabs { height: 19px; font-size: 8.600px; }
.tab.fp-off { width: 89px; padding-left: 8px; }
.tab.fp-act { width: 47px; padding-left: 5px; color: #eee; }
.marks { flex: 1; font-size: 7.600px; }
.marks li { padding-left: 12px; }
.anc { width: 9px; height: 10px; margin-right: 4px; color: #aaa; }
.fp-foot { height: 14px; flex: none; display: flex; justify-content: flex-end; gap: 9px; padding-right: 15px; color: #bbb; }
.fp-grip { height: 5px; flex: none; background: #3c3c3c; }
```
